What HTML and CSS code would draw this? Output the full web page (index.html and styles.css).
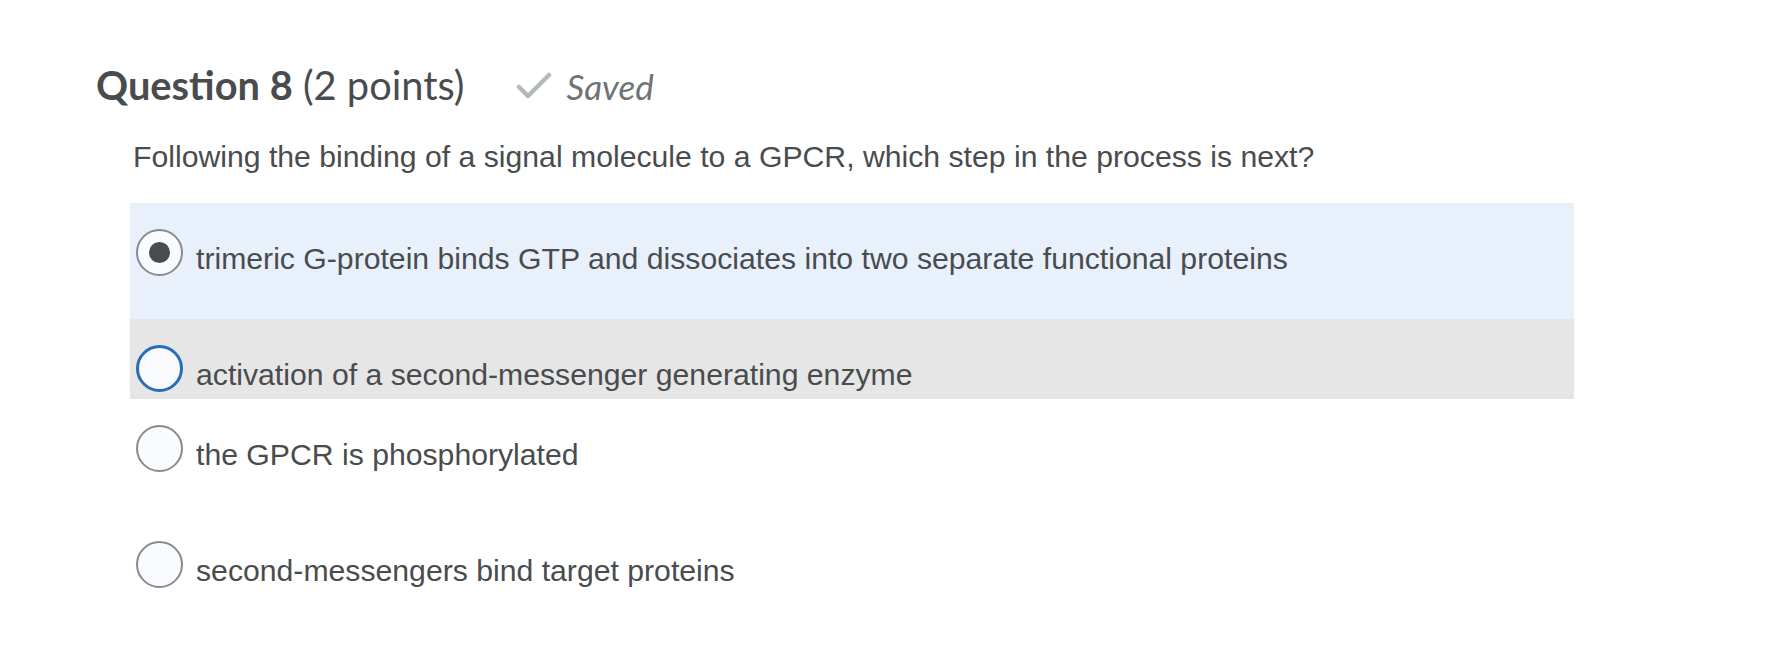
FILE: index.html
```html
<!DOCTYPE html>
<html>
<head>
<meta charset="utf-8">
<link rel="stylesheet" href="styles.css">
</head>
<body>
<div class="page">
  <div class="heading">
    <h2 class="title"><strong>Question 8</strong> (2 points)</h2>
    <span class="saved">
      <svg class="check" width="36" height="28" viewBox="0 0 36 28"><polyline points="3,15 12,24 33,3" fill="none" stroke="#b4b9bc" stroke-width="4.5" stroke-linecap="round" stroke-linejoin="round"/></svg>
      <em>Saved</em>
    </span>
  </div>
  <p class="question">Following the binding of a signal molecule to a GPCR, which step in the process is next?</p>
  <div class="options">
    <label class="option opt-tall selected">
      <span class="radio checked"><span class="dot"></span></span>
      <span class="text">trimeric G-protein binds GTP and dissociates into two separate functional proteins</span>
    </label>
    <label class="option opt-short hover">
      <span class="radio focus"></span>
      <span class="text">activation of a second-messenger generating enzyme</span>
    </label>
    <label class="option opt-tall">
      <span class="radio"></span>
      <span class="text">the GPCR is phosphorylated</span>
    </label>
    <label class="option opt-last">
      <span class="radio"></span>
      <span class="text">second-messengers bind target proteins</span>
    </label>
  </div>
</div>
</body>
</html>
```
FILE: styles.css
```css
html, body {
  margin: 0;
  padding: 0;
  background: #ffffff;
}

.page {
  padding: 62px 0 0 96px;
  color: #494c4e;
}

.heading {
  display: flex;
  align-items: baseline;
  height: 46px;
}

.title {
  margin: 0;
  font-family: Lato, "Open Sans", sans-serif;
  font-size: 39.8px;
  line-height: 46px;
  font-weight: 400;
  color: #494c4e;
}

.title strong {
  font-weight: 700;
}

.saved {
  display: inline-flex;
  align-items: baseline;
  margin-left: 52px;
  font-family: Lato, "Open Sans", sans-serif;
  font-size: 35px;
  line-height: 46px;
  color: #6e7376;
}

.check {
  align-self: center;
  margin-right: 14px;
}

.saved em {
  font-style: italic;
}

.question {
  margin: 32px 0 0 37px;
  font-family: "Liberation Sans", Arial, sans-serif;
  font-size: 30.2px;
  line-height: 34px;
  color: #494c4e;
}

.options {
  margin-top: 29px;
  margin-left: 34px;
  width: 1444px;
}

.option {
  display: flex;
  align-items: flex-start;
  box-sizing: border-box;
  padding: 26px 0 0 6px;
  font-family: "Liberation Sans", Arial, sans-serif;
  font-size: 30.2px;
  color: #494c4e;
}

.opt-tall { height: 116px; }
.opt-short { height: 80px; }
.opt-last { height: 100px; }

.selected { background: #e8f1fb; }
.hover { background: #e6e6e6; }

.radio {
  flex: none;
  box-sizing: border-box;
  width: 47px;
  height: 47px;
  border-radius: 50%;
  border: 2px solid #868b8e;
  background: #f9fbff;
  display: flex;
  align-items: center;
  justify-content: center;
}

.radio.focus {
  border: 3.5px solid #2b6cb8;
}

.dot {
  width: 21px;
  height: 21px;
  border-radius: 50%;
  background: #494c4e;
}

.text {
  margin-left: 13px;
  margin-top: 6px;
  line-height: 47px;
}
```
